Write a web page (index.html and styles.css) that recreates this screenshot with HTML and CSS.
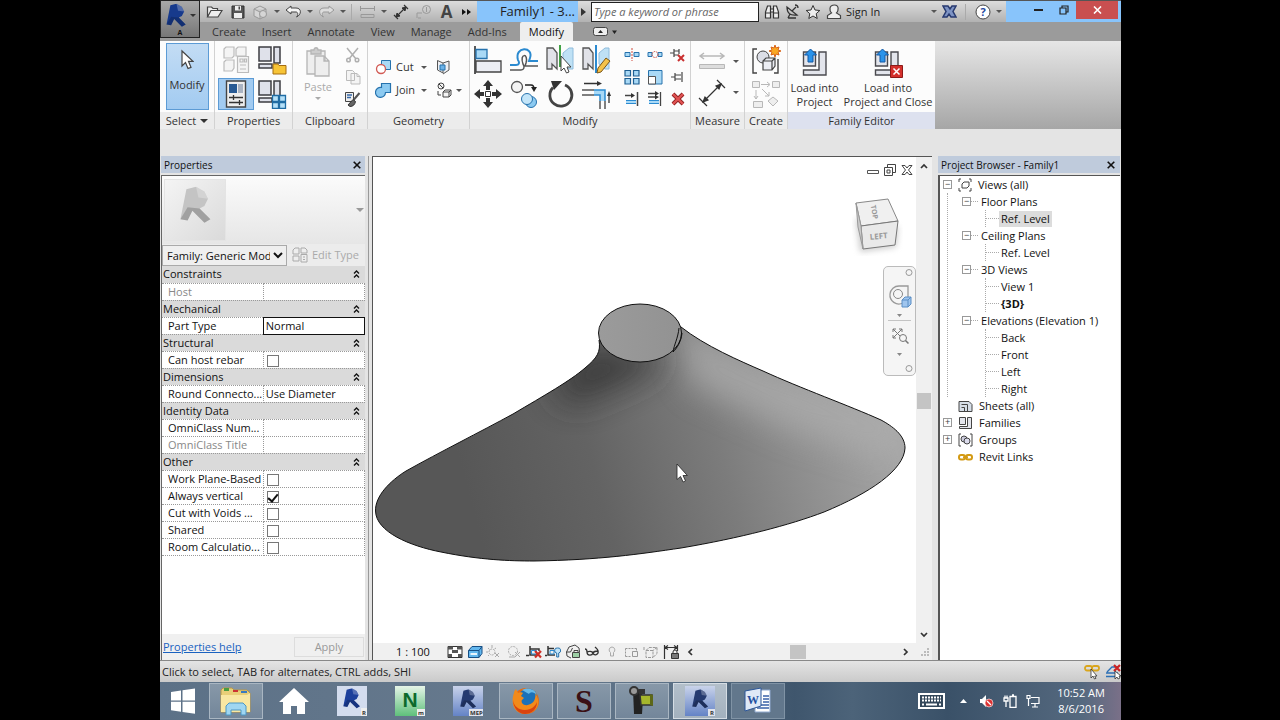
FILE: index.html
```html
<!DOCTYPE html>
<html lang="en">
<head>
<meta charset="utf-8">
<title>Family1 - 3D View</title>
<link rel="stylesheet" href="styles.css">
</head>
<body>
<svg class="sprite" aria-hidden="true">
  <symbol id="rlogo" viewBox="0 0 30 32">
    <path d="M7 2 15 0 22 4 25 10 22 16 18 18 27 27 22 30 12 20 8 28 2 27Z" fill="currentColor"/>
    <path d="M15 0 22 4 25 10 17 9Z" fill="#fff" opacity=".25"/>
    <path d="M8 17 18 18 27 27 22 30 12 20 8 28 2 27Z" fill="#000" opacity=".18"/>
  </symbol>
  <symbol id="fold" viewBox="0 0 7 10">
    <path d="M1 4.500 3.500 2 6 4.500M1 8.500 3.500 6 6 8.500" fill="none" stroke="#111" stroke-width="1.300"/>
  </symbol>
</svg>
<div class="app">
  <header class="head">
    <button class="appbtn" aria-label="Application menu">
      <svg width="23" height="26" viewBox="0 0 30 32" color="#173a8c"><use href="#rlogo"/></svg><i class="dd"></i><small>A</small>
    </button>
    <div class="title">
      <div class="qat">
        <button aria-label="Open"><svg width="17" height="16" viewBox="0 0 17 16"><path d="M1.500 13V3h4l1.500 1.500h4.500v2M1.500 13 5 6.500h11L12 13z" fill="#eee" stroke="#444" stroke-width="1.200"/></svg></button>
        <button aria-label="Save"><svg width="16" height="16" viewBox="0 0 16 16"><path d="M2 2h12v12H2z" fill="#555" stroke="#333"/><path d="M5 2h6v4.500H5zM4 9h8v5H4z" fill="#eee"/><path d="M8.500 2.500h1.500v3H8.500z" fill="#444"/></svg></button>
        <button aria-label="Synchronize"><svg width="17" height="16" viewBox="0 0 17 16" fill="#d5d5d5" stroke="#999"><path d="M2 5 8 2l6 3v7l-6 3-6-3zM2 5l6 3 6-3M8 8v7"/><circle cx="11" cy="10" r="3.500"/></svg></button>
        <button class="n" aria-label="Sync options"><i class="dd"></i></button>
        <button aria-label="Undo"><svg width="17" height="14" viewBox="0 0 17 14"><path d="M6 1 1 5l5 4V7h5c2 0 2.500 3 .5 5 5-2 5.500-9-.5-9H6z" fill="#f4f4f4" stroke="#444"/></svg></button>
        <button class="n" aria-label="Undo list"><i class="dd"></i></button>
        <button aria-label="Redo"><svg width="17" height="14" viewBox="0 0 17 14"><path d="m11 1 5 4-5 4V7H6c-2 0-2.500 3-.5 5C.5 10 0 3 6 3h5z" fill="#ddd" stroke="#999"/></svg></button>
        <button class="n" aria-label="Redo list"><i class="dd"></i></button>
        <span class="vr"></span>
        <button aria-label="Measure"><svg width="17" height="14" viewBox="0 0 17 14" stroke="#999" fill="none"><path d="M1 3.500h15M1.500 1v5M15.500 1v5M2 9.500h13v3H2z"/></svg></button>
        <button class="n" aria-label="Measure options"><i class="dd"></i></button>
        <button aria-label="Aligned dimension"><svg width="16" height="16" viewBox="0 0 16 16" stroke="#333" fill="none"><path d="M3 13 13 3M1 11l4 4M11 1l4 4" stroke-width="1.200"/><path d="m3 13 1-4 3 3zM13 3l-4 1 3 3z" fill="#333"/></svg></button>
        <button aria-label="Tag"><svg width="16" height="16" viewBox="0 0 16 16" stroke="#999" fill="none"><circle cx="10.500" cy="5.500" r="4"/><path d="M10.500 3v5M1 14V9h5M2 14h3"/></svg></button>
        <button class="letter" aria-label="Text">A</button>
        <button class="more" aria-label="More"><svg width="9" height="6" viewBox="0 0 9 6"><path d="m0 0 4 3-4 3zM5 0l4 3-4 3z" fill="#111"/></svg></button>
      </div>
      <h1 class="doc">Family1 - 3...</h1>
      <div class="info">
        <svg width="5" height="8" viewBox="0 0 5 8"><path d="m0 0 5 4-5 4z" fill="#333"/></svg>
        <input class="search" type="text" placeholder="Type a keyword or phrase" aria-label="Search help">
        <button aria-label="Find"><svg width="16" height="16" viewBox="0 0 16 16" fill="#eee" stroke="#333" stroke-width="1.200"><path d="M1.500 14V8l2-6h3v12zM9.500 14V2h3l2 6v6zM6.500 5h3v3h-3zM1.500 9h5M9.500 9h5"/></svg></button>
        <button aria-label="Communication center"><svg width="15" height="16" viewBox="0 0 15 16" fill="none" stroke="#333" stroke-width="1.300"><path d="M2 3c0 6 3 9 10 8zM7 7l4-4M3 14h8M5 10l-2 4M10 1c2 0 3 1 3 3"/></svg></button>
        <button aria-label="Favorites"><svg width="16" height="16" viewBox="0 0 16 16"><path d="m8 1.500 2 4.500 4.800.5-3.600 3.200 1 4.800L8 12l-4.200 2.500 1-4.800L1.200 6.500 6 6z" fill="#eee" stroke="#333"/></svg></button>
        <button class="sign"><svg width="17" height="16" viewBox="0 0 17 16"><path d="M8.500 1c5 0 4 6 2 8l4 2.500v3h-13v-3l4-2.500c-2-2-3-8 3-8z" fill="#eee" stroke="#444" stroke-width="1.200"/></svg>Sign In</button>
        <i class="dd"></i>
        <button aria-label="Exchange"><svg width="15" height="13" viewBox="0 0 15 13"><path d="M1 1h5l2 3 2-3h4l-3 5.500 3 5.500H9L7 9l-2 3H1l3-5.500z" fill="#7d93c4" stroke="#283a70" stroke-width="1.500"/></svg></button>
        <span class="vr"></span>
        <button aria-label="Help"><svg width="16" height="16" viewBox="0 0 16 16"><circle cx="8" cy="8" r="7" fill="#fff" stroke="#444"/><text x="8" y="12" text-anchor="middle" class="q">?</text></svg></button>
        <i class="dd"></i>
      </div>
      <div class="winbtns">
        <button aria-label="Minimize"><svg width="9" height="4"><path d="M0 1h9v2H0z" fill="#222"/></svg></button>
        <button aria-label="Restore"><svg width="10" height="10" viewBox="0 0 10 10"><path d="M1 3h6v6H1zM3 3V1h6v6H7" fill="none" stroke="#222" stroke-width="1.200"/></svg></button>
        <button class="close" aria-label="Close"><svg width="9" height="8" viewBox="0 0 9 8"><path d="m1 .5 7 7M8 .5l-7 7" stroke="#fff" stroke-width="1.600"/></svg></button>
      </div>
    </div>
    <nav class="tabs">
      <button>Create</button><button>Insert</button><button>Annotate</button><button>View</button><button>Manage</button><button>Add-Ins</button><button class="on">Modify</button>
      <button class="mini" aria-label="Minimize ribbon"><svg width="24" height="9" viewBox="0 0 24 9"><rect x=".5" y=".5" width="14" height="8" rx="2" fill="#eee" stroke="#444"/><path d="m5 6 2.500-3L10 6zM19 3.500h5L21.500 7z" fill="#222"/></svg></button>
    </nav>
  </header>

  <section class="ribbon" aria-label="Ribbon">
    <div class="pan p-select">
      <div class="tools"><button class="modify"><svg width="14" height="22" viewBox="0 0 14 22"><path d="M2 2v15l3.500-3.500L8 19.500l3-1.200-2.500-6H13z" fill="#fff" stroke="#444" stroke-width="1.200"/></svg>Modify</button></div>
      <button class="plabel">Select <i class="dd big"></i></button>
    </div>
    <div class="pan p-props">
      <div class="tools two">
        <button aria-label="Family category"><svg width="30" height="30" viewBox="0 0 30 30" fill="#f4f4f4" stroke="#bbb" stroke-width="1.200"><path d="M3 4 5 2h8v9l-2 2H3zM15 4l2-2h8v9H15zM3 17l2-2h8v8l-2 3H3z"/><path d="M16.500 11.500h11v16h-11zM19 14h3v3h-3zM23.500 14h2v3h-2zM19 20h6M19 24h6"/></svg></button>
        <button aria-label="Family types"><svg width="30" height="30" viewBox="0 0 30 30"><path d="M2 2h12v14H2zM17 2h6v16h-6zM2 19h13v4H2z" fill="#dfe1ea" stroke="#3d3d42" stroke-width="1.500"/><path d="M16 19h5l1 1.500h7V29H16z" fill="#f7c436" stroke="#a46c11"/></svg></button>
        <button class="sel" aria-label="Properties"><svg width="22" height="28" viewBox="0 0 22 28"><path d="M1.500 1h19v26h-19z" fill="#eee" stroke="#444" stroke-width="1.400"/><path d="M4 4h8v9H4z" fill="#285a94"/><path d="M13 4h5v9h-5z" fill="#a9b3c2"/><path d="M4 17.500h14M4 22.500h14M8.500 15v5M14.500 20v5" stroke="#333" stroke-width="1.300"/></svg></button>
        <button aria-label="Type properties"><svg width="30" height="30" viewBox="0 0 30 30"><path d="M2 2h12v14H2zM17 2h6v16h-6zM2 19h13v4H2z" fill="#dfe1ea" stroke="#3d3d42" stroke-width="1.500"/><path d="M15.500 16.500h6v6h-6zM22.500 16.500h6v6h-6zM15.500 23.500h6v6h-6zM22.500 23.500h6v6h-6z" fill="#b5e0f8" stroke="#1f6ca4" stroke-width="1.300"/></svg></button>
      </div>
      <div class="plabel">Properties</div>
    </div>
    <div class="pan p-clip">
      <div class="tools clip">
        <button class="paste" disabled><svg width="26" height="30" viewBox="0 0 26 30" fill="#eee" stroke="#b5b5b5" stroke-width="1.300"><path d="M2 4h18v23H2z"/><path d="M6 5V3h3c0-3 4-3 4 0h3v4H6z" fill="#ccc"/><path d="M10 9h9l5 5v15H10zM19 9v5h5"/></svg>Paste<i class="dd"></i></button>
        <div class="col">
          <button aria-label="Cut to clipboard"><svg width="16" height="16" viewBox="0 0 16 16" fill="none" stroke="#b0b0b0" stroke-width="1.500"><path d="m2 1 9 11M13 1 4 12"/><circle cx="3.500" cy="13" r="1.800"/><circle cx="12" cy="13" r="1.800"/></svg></button>
          <button aria-label="Copy"><svg width="16" height="16" viewBox="0 0 16 16" fill="#f4f4f4" stroke="#bbb"><path d="M1.500 1.500h6l2 2v8h-8zM6 4.500h6l3 3V15H6zM12 4.500v3h3"/></svg></button>
          <button aria-label="Match type"><svg width="17" height="16" viewBox="0 0 17 16"><path d="M1.500 1.500h8v9h-8z" fill="#eee" stroke="#444"/><path d="M3 4h5M3 6.500h4" stroke="#3668a8" stroke-width="1.500"/><path d="m15.500 2-6 7" stroke="#555" stroke-width="2"/><path d="M9 8.500 4 14l2 1.500c3 0 5-2 5.500-5z" fill="#666" stroke="#333"/></svg></button>
        </div>
      </div>
      <div class="plabel">Clipboard</div>
    </div>
    <div class="pan p-geo">
      <div class="tools geo">
        <button><svg width="17" height="16" viewBox="0 0 17 16"><path d="M6.500 1.500h9v9h-9z" fill="#a9d9f6" stroke="#2672ad"/><circle cx="6" cy="10" r="4.500" fill="#fff" stroke="#d25b55" stroke-width="1.300"/></svg>Cut<i class="dd"></i></button>
        <button aria-label="Cope"><svg width="15" height="16" viewBox="0 0 15 16"><path d="M1.500 1.500 7 4v10l-5.500-3zM7 4l6-2v9l-6 4" fill="#eef0f4" stroke="#555"/><path d="M4 6h5v5H4z" fill="#6cb2e7" stroke="#2672ad"/></svg></button>
        <button><svg width="17" height="16" viewBox="0 0 17 16"><path d="M6.500 1.500h9v9h-5a5 5 0 1 1-4-5z" fill="#8ccaf1" stroke="#2672ad" stroke-width="1.200"/></svg>Join<i class="dd"></i></button>
        <button aria-label="Split face"><svg width="16" height="16" viewBox="0 0 16 16" fill="#f4f4f4" stroke="#444"><circle cx="5" cy="4" r="3"/><path d="m3 2 4 4M7 10l2-2h6v5l-2 2H7zM7 10h6v5M13 10l2-2M2 9v4h3"/></svg><i class="dd"></i></button>
      </div>
      <div class="plabel">Geometry</div>
    </div>
    <div class="pan p-mod">
      <div class="tools mod">
        <div class="bigs">
          <button aria-label="Align"><svg width="30" height="30" viewBox="0 0 30 30"><path d="M2 1v28" stroke="#222" stroke-width="1.500"/><path d="M3 4.500h11v9H3z" fill="#a9d9f6" stroke="#2672ad" stroke-width="1.300"/><path d="M3 16h25v11H3z" fill="#eceef4" stroke="#444" stroke-width="1.300"/></svg></button>
          <button aria-label="Offset"><svg width="30" height="30" viewBox="0 0 30 30" fill="none"><path d="M1 20h6c3 0 4-2 2-5C5 1 25 1 21 13l-1 3h9" stroke="#2b8ad0" stroke-width="2"/><path d="M1 25h11c3 0 4-3 2-6-4-11 6-11 3-1l-1 3h13" stroke="#555" stroke-width="1.500"/></svg></button>
          <button aria-label="Mirror pick"><svg width="30" height="30" viewBox="0 0 30 30"><path d="M2 3v21h5v-5l5 5V8L8 3z" fill="#e1e2e8" stroke="#555" stroke-width="1.300"/><path d="M28 3v21h-4l-6-5V8l6-5z" fill="#bfe1f5" stroke="#8fbcdc"/><path d="M15 0v22" stroke="#43a246" stroke-width="2"/><path d="M16 11v15l3-3 2.500 5 2.500-1-2-5h4z" fill="#fff" stroke="#444"/></svg></button>
          <button aria-label="Mirror draw"><svg width="30" height="30" viewBox="0 0 30 30"><path d="M2 3v21h5v-5l5 5V8L8 3z" fill="#e1e2e8" stroke="#555" stroke-width="1.300"/><path d="M28 3v21h-4l-6-5V8l6-5z" fill="#bfe1f5" stroke="#8fbcdc"/><path d="M15 0v28" stroke="#2b8ad0" stroke-width="2"/><path d="m25 13 4 3-9 11-4 1 1-5z" fill="#f4c24a" stroke="#7a5518"/></svg></button>
          <button aria-label="Move"><svg width="30" height="30" viewBox="0 0 30 30"><path d="m15 1 5 6h-3v4h-4V7h-3zM15 29l5-6h-3v-4h-4v4h-3zM1 15l6-5v3h4v4H7v3zM29 15l-6-5v3h-4v4h4v3z" fill="#333"/><path d="M12.500 12.500h5v5h-5z" fill="#fff" stroke="#333"/></svg></button>
          <button aria-label="Copy element"><svg width="30" height="30" viewBox="0 0 30 30"><circle cx="8" cy="8" r="5.500" fill="#f4f4f4" stroke="#555" stroke-width="1.300"/><path d="M16 6h6c2 0 3 1 3 4" fill="none" stroke="#222" stroke-width="1.500"/><path d="M22 8h6l-3 5z" fill="#222"/><circle cx="22" cy="23" r="5.500" fill="#8ccaf1" stroke="#2672ad"/><circle cx="18" cy="20" r="5.500" fill="#c3e5f9" stroke="#2672ad"/></svg></button>
          <button aria-label="Rotate"><svg width="30" height="30" viewBox="0 0 30 30"><path d="M8 8.500A11 11 0 1 0 20 6" fill="none" stroke="#444" stroke-width="2.800"/><path d="M6 2h11L9 11z" fill="#333"/></svg></button>
          <button aria-label="Trim to corner"><svg width="30" height="30" viewBox="0 0 30 30" fill="none"><path d="M1 11h12M1 16h12M19 22v8M24 22v8" stroke="#555" stroke-width="1.500"/><path d="M13 11h11v11h-5v-6h-6z" fill="#a9d9f6"/><path d="M13 11h11v11M13 16h6v6" stroke="#2b8ad0" stroke-width="1.500"/><path d="M3 4.500h15M28 24v-9" stroke="#333" stroke-width="1.300"/><path d="m16 2 5 2.500L16 7zM26 17l2-5 2 5z" fill="#333"/></svg></button>
        </div>
        <div class="smalls">
          <button aria-label="Split"><svg width="16" height="16" viewBox="0 0 16 16"><path d="M1 5.500h5v4H1zM10 5.500h5v4h-5z" fill="#a9d9f6" stroke="#2672ad"/><path d="M8 1v13" stroke="#d04b3d" stroke-dasharray="2 1"/></svg></button>
          <button aria-label="Split with gap"><svg width="16" height="16" viewBox="0 0 16 16"><path d="M1 5.500h4v4H1zM11 5.500h4v4h-4z" fill="#a9d9f6" stroke="#2672ad"/><circle cx="8" cy="7.500" r="3" fill="none" stroke="#d04b3d" stroke-dasharray="1.500 1"/></svg></button>
          <button aria-label="Unpin"><svg width="17" height="16" viewBox="0 0 17 16"><path d="M1 6h4M5 2v8M5 4h5M5 8h5M10 2v5" stroke="#444" fill="none" stroke-width="1.200"/><path d="m9 8 6 6M15 8l-6 6" stroke="#c92f2f" stroke-width="2"/></svg></button>
          <button aria-label="Array"><svg width="16" height="16" viewBox="0 0 16 16"><path d="M1 1.500h5.500V7H1zM9.500 1.500H15V7H9.500zM1 9.500h5.500V15H1zM9.500 9.500H15V15H9.500z" fill="#a9d9f6" stroke="#1f5f92" stroke-width="1.200"/></svg></button>
          <button aria-label="Scale"><svg width="16" height="16" viewBox="0 0 16 16"><path d="M1.500 1.500H15V15H1.500z" fill="#a9d9f6" stroke="#2672ad"/><path d="M1.500 7.500h7V15h-7z" fill="#fff" stroke="#555"/></svg></button>
          <button aria-label="Pin"><svg width="16" height="16" viewBox="0 0 16 16"><path d="M1 8h4M5 4v8M5 6h6M5 10h6M12 3v10" stroke="#444" fill="none" stroke-width="1.200"/></svg></button>
          <button aria-label="Trim single"><svg width="16" height="16" viewBox="0 0 16 16"><path d="M2 9.500h10v3H2z" fill="#a9d9f6"/><path d="M2 9.500h10M2 12.500h10" stroke="#2b8ad0"/><path d="M13.500 1v14M1 4.500h7" stroke="#444" stroke-width="1.500"/><path d="m7 2 4 2.500L7 7z" fill="#333"/></svg></button>
          <button aria-label="Trim multiple"><svg width="16" height="16" viewBox="0 0 16 16"><path d="M2 9.500h10v3H2z" fill="#a9d9f6"/><path d="M2 9.500h10M2 12.500h10" stroke="#2b8ad0"/><path d="M13.500 1v14M1 2.500h8M1 6h8" stroke="#444" stroke-width="1.300"/><path d="m8 0 4 2.500L8 5zM8 4l4 2-4 2.500z" fill="#333"/></svg></button>
          <button aria-label="Delete"><svg width="14" height="14" viewBox="0 0 14 14"><path d="m2 2 10 10M12 2 2 12" stroke="#8d1f1f" stroke-width="4"/><path d="m2 2 10 10M12 2 2 12" stroke="#e05252" stroke-width="2.400"/></svg></button>
        </div>
      </div>
      <div class="plabel">Modify</div>
    </div>
    <div class="pan p-meas">
      <div class="tools meas">
        <button disabled aria-label="Measure between"><svg width="30" height="24" viewBox="0 0 30 24" stroke="#b8b8b8" fill="#ddd"><path d="M3 7h24M7 4 3 7l4 3M23 4l4 3-4 3" fill="none" stroke-width="1.500"/><path d="M2.500 15.500h25v4h-25z"/></svg><i class="dd"></i></button>
        <button aria-label="Aligned"><svg width="30" height="30" viewBox="0 0 30 30" stroke="#333" fill="none" stroke-width="1.200"><path d="M6 24 24 6M2 20l8 8M20 2l8 8"/><path d="m6 24 2-5 3 3zM24 6l-5 2 3 3z" fill="#333"/></svg><i class="dd"></i></button>
      </div>
      <div class="plabel">Measure</div>
    </div>
    <div class="pan p-create">
      <div class="tools one">
        <button aria-label="Create group"><svg width="30" height="30" viewBox="0 0 30 30"><path d="M6 4H2v24h4M23 28h4V14" fill="none" stroke="#444" stroke-width="1.400"/><circle cx="12" cy="12" r="6" fill="#dcdee6" stroke="#444"/><path d="M12 16l3-3h9v8l-3 4h-9zM12 16h9v9M21 16l3-3" fill="#eceef4" stroke="#444" stroke-width="1.200"/><path d="m24 0 1 3 3-1-1 3 3 1-3 1 1 3-3-1-1 3-1-3-3 1 1-3-3-1 3-1-1-3 3 1z" fill="#f9a823" stroke="#d8641a"/></svg></button>
        <button disabled aria-label="Create similar"><svg width="30" height="30" viewBox="0 0 30 30" stroke="#b8b8b8" fill="#eee"><path d="M1.500 2.500h7v6h-7zM21.500 2.500h7v6h-7zM2.500 22.500h9v6h-9zM22 18l5 4-5 5-5-5z"/><path d="M10 5.500h8M5 11v9M11 10l7 7M16 3l3 2.500L16 8M3 17l2 3 2-3M18 13v4h-4" fill="none"/></svg></button>
      </div>
      <div class="plabel">Create</div>
    </div>
    <div class="pan p-fam">
      <div class="tools fam">
        <button><svg width="28" height="30" viewBox="0 0 28 30"><path d="M2.500 4h12v14h-12zM18 4h7v23H2.500v-5H18z" fill="#e3e5ec" stroke="#4a4a4f" stroke-width="1.400"/><path d="m9.500 1 6 6H12v7H7V7H3.500z" fill="#2a93ea" stroke="#1258a4"/></svg>Load into<br>Project</button>
        <button><svg width="30" height="30" viewBox="0 0 30 30"><path d="M2.500 4h12v14h-12zM18 4h7v23H2.500v-5H18z" fill="#e3e5ec" stroke="#4a4a4f" stroke-width="1.400"/><path d="m9.500 1 6 6H12v7H7V7H3.500z" fill="#2a93ea" stroke="#1258a4"/><path d="M17.500 17.500h12v12h-12z" fill="#d4302c" stroke="#8d1a18"/><path d="m20.500 20.500 6 6M26.500 20.500l-6 6" stroke="#fff" stroke-width="1.500"/></svg>Load into<br>Project and Close</button>
      </div>
      <div class="plabel">Family Editor</div>
    </div>
  </section>

  <main class="work">
    <aside class="props">
      <h2 class="cap">Properties<button aria-label="Close properties"><svg width="8" height="8" viewBox="0 0 8 8"><path d="m.7.7 6.600 6.600M7.300.7.7 7.300" stroke="#111" stroke-width="1.600"/></svg></button></h2>
      <div class="pbody">
        <div class="type"><div class="thumb"><svg width="36" height="44" viewBox="0 0 30 32" color="#c4c4c4"><use href="#rlogo"/></svg></div><i class="dd big"></i></div>
        <div class="filter">
          <select aria-label="Filter"><option>Family: Generic Models</option></select>
          <button disabled><svg width="16" height="16" viewBox="0 0 16 16" fill="#eee" stroke="#aaa"><path d="M1 3l2-2h4v6H1zM9 1h4l2 2v3H9zM1 9h6v5H1zM9 7.500h6V15H9zM11 10h2M11 12.500h2"/></svg>Edit Type</button>
        </div>
        <table>
          <tr class="h"><th colspan="2">Constraints<svg width="7" height="10"><use href="#fold"/></svg></th></tr>
          <tr class="off"><td>Host</td><td></td></tr>
          <tr class="h"><th colspan="2">Mechanical<svg width="7" height="10"><use href="#fold"/></svg></th></tr>
          <tr><td><label for="pt">Part Type</label></td><td class="edit"><input id="pt" type="text" value="Normal"></td></tr>
          <tr class="h"><th colspan="2">Structural<svg width="7" height="10"><use href="#fold"/></svg></th></tr>
          <tr><td><label for="c1">Can host rebar</label></td><td><input id="c1" type="checkbox"></td></tr>
          <tr class="h"><th colspan="2">Dimensions<svg width="7" height="10"><use href="#fold"/></svg></th></tr>
          <tr><td>Round Connecto...</td><td>Use Diameter</td></tr>
          <tr class="h"><th colspan="2">Identity Data<svg width="7" height="10"><use href="#fold"/></svg></th></tr>
          <tr><td>OmniClass Num...</td><td></td></tr>
          <tr class="off"><td>OmniClass Title</td><td></td></tr>
          <tr class="h"><th colspan="2">Other<svg width="7" height="10"><use href="#fold"/></svg></th></tr>
          <tr><td><label for="c2">Work Plane-Based</label></td><td><input id="c2" type="checkbox"></td></tr>
          <tr><td><label for="c3">Always vertical</label></td><td><input id="c3" type="checkbox" checked></td></tr>
          <tr><td><label for="c4">Cut with Voids ...</label></td><td><input id="c4" type="checkbox"></td></tr>
          <tr><td><label for="c5">Shared</label></td><td><input id="c5" type="checkbox"></td></tr>
          <tr><td><label for="c6">Room Calculatio...</label></td><td><input id="c6" type="checkbox"></td></tr>
        </table>
        <div class="pfoot"><a href="#">Properties help</a><button disabled>Apply</button></div>
      </div>
    </aside>

    <section class="view" aria-label="3D view">
      <div class="canvas">
        <svg class="scene" viewBox="373 157 543 486" preserveAspectRatio="xMidYMid meet">
          <defs>
            <linearGradient id="g" gradientUnits="userSpaceOnUse" x1="470" y1="500" x2="880" y2="390"><stop offset="0" stop-color="#575757"/><stop offset=".3" stop-color="#636363"/><stop offset=".6" stop-color="#7c7c7c"/><stop offset="1" stop-color="#a6a6a6"/></linearGradient>
            <linearGradient id="t" x1="0" x2="1"><stop offset="0" stop-color="#9b9b9b"/><stop offset="1" stop-color="#929292"/></linearGradient>
            <filter id="b1" x="-50%" y="-50%" width="200%" height="200%"><feGaussianBlur stdDeviation="16"/></filter>
            <clipPath id="cp"><path id="body" d="M599 340C601 352 597 358 585 368C570 381 545 395 513 414C480 432 440 452 406 471C390 481 375 496 375.500 511C376 532 410 546 441 552C480 560 510 561 534 561C600 560 640 554 681 548C740 538 790 525 824 512C870 493 904 470 905 448C905 435 892 426 881 420C850 406 800 388 763 371C740 361 705 346 681 327Z"/></clipPath>
          </defs>
          <g clip-path="url(#cp)">
            <path d="M370 300h540v270H370z" fill="url(#g)"/>
            <path d="M675 330 690 385 790 430 890 460 915 420 760 360 680 320Z" fill="#adadad" opacity=".75" filter="url(#b1)"/>
            <path d="M585 345 655 352 664 362 635 380 575 405 550 390Z" fill="#303030" opacity=".8" filter="url(#b1)"/>
          </g>
          <use href="#body" fill="none" stroke="#111" stroke-width="1"/>
          <ellipse cx="640" cy="333" rx="41.500" ry="29" fill="url(#t)" stroke="#111"/>
          <path d="M679 328C678 338 674 345 673 352M682 333C681 342 677 348 673 352" fill="none" stroke="#111"/>
          <path d="M677 464v15.500l3.500-3 2.600 5.500 2.400-1.100-2.500-5.400h4.300z" fill="#fff" stroke="#222" stroke-width=".8"/>
        </svg>
        <div class="mdi">
          <button aria-label="Minimize view"><svg width="12" height="12" viewBox="0 0 12 12"><path d="M.5 6.500h11v3H.5z" fill="#fff" stroke="#555"/></svg></button>
          <button aria-label="Restore view"><svg width="12" height="12" viewBox="0 0 12 12" fill="#fff" stroke="#444"><path d="M3.500.5h8v8h-8z"/><path d="M.5 3.500h8v8h-8zM3 6h3v3H3z"/></svg></button>
          <button aria-label="Close view"><svg width="12" height="12" viewBox="0 0 12 12"><path d="M1 1.500h3l2 2.500 2-2.500h3L7.500 6l3.500 4.500H8L6 8l-2 2.500H1L4.500 6z" fill="#fff" stroke="#444"/></svg></button>
        </div>
        <svg class="cube" width="54" height="62" viewBox="0 0 54 62">
          <filter id="sh"><feGaussianBlur stdDeviation="3"/></filter>
          <path d="m4 24 4 34 36-5 2-20z" fill="#999" opacity=".5" filter="url(#sh)"/>
          <path d="M4 9 36 5 46 27 9 32z" fill="#f0f0f0" stroke="#888"/>
          <path d="m9 32 37-5-3 24-32 4z" fill="#e9e9e9" stroke="#777"/>
          <path d="m4 9 5 23 2 23-5-22z" fill="#ccc" stroke="#999"/>
          <text x="27" y="45" text-anchor="middle" transform="rotate(-5 27 45)">LEFT</text>
          <text x="23" y="21" text-anchor="middle" class="s" transform="rotate(80 23 18)">TOP</text>
        </svg>
        <div class="nav">
          <svg width="31" height="108" viewBox="0 0 31 108" fill="none" stroke="#aaa"><circle cx="25" cy="5.500" r="3" stroke="#999"/><path d="M6 27a9 9 0 0 1 9-8h9v11M6 27a9 9 0 0 0 13 9" stroke="#999" stroke-width="1.300"/><circle cx="14" cy="27" r="4.500" stroke="#888"/><path d="m18 33 3-3h6v7l-3 3h-6z" fill="#9fc5ee" stroke="#5b8ec5"/><path d="M18 33h6v7M24 33l3-3" stroke="#5b8ec5"/><path d="M13 47h5l-2.500 3z" fill="#888" stroke="none"/><path d="M4 53.500h23" stroke="#c4c4c4"/><path d="m9 62 9 9M18 62l-9 9M9 65v-3h3M15 62h3v3M9 68v3h3" stroke="#777"/><circle cx="19" cy="71" r="3.500" fill="#f5f5f5" stroke="#777"/><path d="m21.500 73.500 3 3" stroke="#777" stroke-width="1.500"/><path d="M13 86h5l-2.500 3z" fill="#888" stroke="none"/><circle cx="25" cy="101.500" r="3" stroke="#999"/></svg>
        </div>
      </div>
      <div class="vscroll"><svg width="8" height="6" viewBox="0 0 8 6"><path d="m1 5 3-3 3 3" fill="none" stroke="#333" stroke-width="1.700"/></svg><span></span><svg width="8" height="6" viewBox="0 0 8 6"><path d="m1 1 3 3 3-3" fill="none" stroke="#333" stroke-width="1.700"/></svg></div>
      <div class="vbar">
        <button class="scale">1 : 100</button>
        <div class="vicons">
          <button aria-label="Detail level"><svg width="16" height="14" viewBox="0 0 16 14"><path d="M1 1.500h14v11H1z" fill="#fff" stroke="#333"/><path d="M1 1.500h5v3H1zM10 1.500h5v3h-5zM5 5h6v3H5zM1 9h4v3H1zM11 9h4v3h-4z" fill="#555"/></svg></button>
          <button aria-label="Visual style"><svg width="16" height="14" viewBox="0 0 16 14"><path d="M1.500 5.500 5 1.500h10v7l-3 4H1.500zM1.500 5.500H12v7M12 5.500l3-4" fill="#63b7ee" stroke="#174f85"/><path d="M3.500 8h6.500v2H3.500z" fill="#e8f4fc"/></svg></button>
          <button aria-label="Sun path"><svg width="16" height="14" viewBox="0 0 16 14" stroke="#aaa" fill="none"><circle cx="6" cy="7" r="3" stroke-dasharray="2 1"/><path d="M6 0v3M0 7h2M2 3l1.500 1.500M10 3l-1.500 1M2 11l1-1M9 8l4 4M13 8l-4 4"/></svg></button>
          <button aria-label="Shadows"><svg width="16" height="14" viewBox="0 0 16 14" stroke="#aaa" fill="none"><circle cx="7" cy="6" r="4.500" stroke-dasharray="2 1"/><path d="M3 12h6M9 7l5 5M14 7l-5 5"/></svg></button>
          <button aria-label="Crop view"><svg width="16" height="14" viewBox="0 0 16 14" fill="none"><path d="M4 1v9h8M0 10.500h3M4 4h9v2" stroke="#333" stroke-width="1.500"/><path d="M5.500 5.500h5V9h-5z" stroke="#2b8ad0"/><path d="m9 6 6 6.500M15 6l-6 6.500" stroke="#cc2e26" stroke-width="2.200"/></svg></button>
          <button aria-label="Crop region"><svg width="16" height="14" viewBox="0 0 16 14" fill="none"><path d="M3 1v9h7M0 10.500h2M3 3.500h6" stroke="#333" stroke-width="1.500"/><path d="M5 5.500h4V9H5z" stroke="#2b8ad0"/><path d="M12.500 3a2.500 2.500 0 0 1 1.200 5v4h-2V8a2.500 2.500 0 0 1 .8-5z" fill="#c3e5f9" stroke="#2672ad"/></svg></button>
          <button aria-label="Locked view"><svg width="16" height="15" viewBox="0 0 16 15" fill="none" stroke="#444"><path d="M1.500 8 4 3l6-2 4 3 .5 4M1.500 8 2 12l4 2M1.500 8h4l2-4M9 8V6.500h4V8"/><path d="M7.500 8.500h7v5h-7z" fill="#9dcfa5"/></svg></button>
          <button aria-label="Hide isolate"><svg width="16" height="14" viewBox="0 0 16 14" fill="none" stroke="#333" stroke-width="1.300"><path d="M1 4c1 0 2 1 2 3 0 4 5 4 6 1 1 3 6 2 5-2 0-2-2-3-3-4M3 7c2-1 5-1 6 1 1-2 3-2 5-2"/></svg></button>
          <button aria-label="Reveal hidden"><svg width="16" height="14" viewBox="0 0 16 14" fill="#eee" stroke="#aaa"><path d="M8 2a3 3 0 0 1 1.500 5.500V11h-3V7.500A3 3 0 0 1 8 2z"/></svg></button>
          <button aria-label="Temporary properties"><svg width="16" height="14" viewBox="0 0 16 14" fill="none" stroke="#999"><path d="M1.500 3.500h11M1.500 3.500v8M12.500 3.500v2M1.500 11.500h5" stroke-dasharray="2 1"/><path d="M8.500 6.500h5v5h-5z"/></svg></button>
          <button aria-label="Displacement"><svg width="16" height="14" viewBox="0 0 16 14" fill="none" stroke="#999"><path d="M3 5.500h7v7H3zM3 5.500l3-3h8l-4 3M14 2.500v6l-4 4M1 2v3" stroke-dasharray="3 1"/></svg></button>
          <button aria-label="Constraints"><svg width="16" height="16" viewBox="0 0 16 16" fill="none" stroke="#333"><path d="M1.500 1v14M14.500 1v6M2 3.500h12M5 1.500l-3 2 3 2M11 1.500l3 2-3 2" stroke-width="1.200"/><path d="M10 9.500V8a2 2 0 0 1 4 0v1.500"/><path d="M8.500 9.500h7v5h-7z" fill="#777"/></svg></button>
        </div>
        <div class="hscroll"><svg width="6" height="8" viewBox="0 0 6 8"><path d="M5 1 2 4l3 3" fill="none" stroke="#333" stroke-width="1.700"/></svg><span></span><svg width="6" height="8" viewBox="0 0 6 8"><path d="m1 1 3 3-3 3" fill="none" stroke="#333" stroke-width="1.700"/></svg></div>
        <svg class="grip" width="10" height="10" viewBox="0 0 10 10"><path d="M7 1h2v2H7zM4 4h2v2H4zM7 4h2v2H7zM1 7h2v2H1zM4 7h2v2H4zM7 7h2v2H7z" fill="#bbb"/></svg>
      </div>
    </section>

    <aside class="browser">
      <h2 class="cap">Project Browser - Family1<button aria-label="Close project browser"><svg width="8" height="8" viewBox="0 0 8 8"><path d="m.7.7 6.600 6.600M7.300.7.7 7.300" stroke="#111" stroke-width="1.600"/></svg></button></h2>
      <ul class="tree">
        <li><div class="row"><i class="ex">−</i><svg width="14" height="14" viewBox="0 0 14 14" fill="none" stroke="#444"><path d="M3 1H1v3M1 10v3h2M11 1h2v3M13 10v3h-2M4 6l2-2h5v4l-2 2H4z"/></svg><span>Views (all)</span></div>
          <ul>
            <li><div class="row"><i class="ex">−</i><i class="dash"></i><span>Floor Plans</span></div><ul><li><div class="row"><span class="cur">Ref. Level</span></div></li></ul></li>
            <li><div class="row"><i class="ex">−</i><i class="dash"></i><span>Ceiling Plans</span></div><ul><li><div class="row"><span>Ref. Level</span></div></li></ul></li>
            <li><div class="row"><i class="ex">−</i><i class="dash"></i><span>3D Views</span></div><ul><li><div class="row"><span>View 1</span></div></li><li><div class="row"><span><b>{3D}</b></span></div></li></ul></li>
            <li><div class="row"><i class="ex">−</i><i class="dash"></i><span>Elevations (Elevation 1)</span></div><ul><li><div class="row"><span>Back</span></div></li><li><div class="row"><span>Front</span></div></li><li><div class="row"><span>Left</span></div></li><li><div class="row"><span>Right</span></div></li></ul></li>
          </ul>
        </li>
        <li><div class="row"><i class="ex no"></i><svg width="15" height="14" viewBox="0 0 15 14" fill="#d7dfe8" stroke="#444"><path d="M1 2.500h10l3 3v7H1zM3.500 5.500h6v7M3.500 8.500h3v4"/></svg><span>Sheets (all)</span></div></li>
        <li><div class="row"><i class="ex">+</i><svg width="15" height="14" viewBox="0 0 15 14" fill="#e3e5ec" stroke="#444"><path d="M1.500 1.500h6v7h-6zM9.500 1.500h4v11h-12v-2h8z"/></svg><span>Families</span></div></li>
        <li><div class="row"><i class="ex">+</i><svg width="15" height="14" viewBox="0 0 15 14" fill="none" stroke="#444"><path d="M3 1H1v12h2M12 1h2v12h-2"/><circle cx="6" cy="6" r="3" fill="#ccd"/><circle cx="9" cy="8" r="3" fill="#dde"/></svg><span>Groups</span></div></li>
        <li><div class="row"><i class="ex no"></i><svg width="15" height="14" viewBox="0 0 15 14" fill="none" stroke="#d39a14" stroke-width="2"><rect x="1" y="5" width="6" height="4.500" rx="2"/><rect x="8" y="5" width="6" height="4.500" rx="2"/><path d="M5 7.300h5"/></svg><span>Revit Links</span></div></li>
      </ul>
    </aside>
  </main>

  <footer class="status">
    <span>Click to select, TAB for alternates, CTRL adds, SHI</span>
    <div>
      <button aria-label="Select links"><svg width="17" height="16" viewBox="0 0 17 16"><g fill="none" stroke="#d9a51c" stroke-width="1.800"><rect x="1" y="2" width="7" height="4.500" rx="2"/><rect x="8" y="2" width="7" height="4.500" rx="2"/></g><path d="M7 5v9l2-2 1.500 3 1.500-.7L10.700 12H13z" fill="#fff" stroke="#333" stroke-width=".8"/></svg></button>
      <button aria-label="Select underlay"><svg width="16" height="16" viewBox="0 0 16 16" fill="none"><path d="m2 8 5-5h6M1 9h12M1 12.500h9" stroke="#2b6fb5" stroke-width="1.300"/><path d="m9 1 6 6M15 1 9 7" stroke="#cc2222" stroke-width="2.200"/><path d="M10 7v8l2-2 1 2 2-1-1-2h2z" fill="#fff" stroke="#333" stroke-width=".8"/></svg></button>
    </div>
  </footer>

  <nav class="taskbar" aria-label="Taskbar">
    <button class="start" aria-label="Start"><svg width="26" height="26" viewBox="0 0 26 26" fill="#fff"><path d="m1 4 10-1.500v10H1zM12.500 2.300 25 .5v12H12.500zM1 13.800h10v10L1 22.300zM12.500 13.800H25v12l-12.500-1.800z"/></svg></button>
    <button class="open" aria-label="File Explorer"><svg width="34" height="30" viewBox="0 0 34 30"><path d="M2 4 4 2h9l2 2h13l3 3v19H2z" fill="#e9cf78" stroke="#b7974a"/><path d="M5 2h5v3H5z" fill="#4a9c3f"/><path d="M14 4h5v2h-5z" fill="#c33"/><path d="M22 5h6v2h-6z" fill="#3a7ac0"/><path d="M2 9h26l3-2v19H2z" fill="#f9e7a2"/><path d="M7 29v-9l3-3h14l3 3v9h-5v-5H12v5z" fill="#9fd6f2" stroke="#4d97c4"/></svg></button>
    <button aria-label="Home"><svg width="30" height="26" viewBox="0 0 30 26"><path d="M15 0 30 14h-4v12h-8v-8h-6v8H4V14H0z" fill="#fff"/></svg></button>
    <button aria-label="Revit"><svg width="30" height="30" viewBox="0 0 30 30"><rect width="30" height="30" fill="#d3dcee"/><svg x="5" y="1" width="20" height="24" viewBox="0 0 30 32" color="#1c3f9c"><use href="#rlogo"/></svg><rect x="24" y="22" width="6" height="8" fill="#eee"/><text x="25" y="29">R</text></svg></button>
    <button aria-label="Navisworks"><svg width="30" height="30" viewBox="0 0 30 30"><defs><linearGradient id="ng" x2="0" y2="1"><stop offset="0" stop-color="#e6f4e8"/><stop offset="1" stop-color="#5fc07b"/></linearGradient></defs><rect width="30" height="30" fill="url(#ng)"/><text x="15" y="21" text-anchor="middle" class="bign">N</text><rect x="22" y="23" width="8" height="7" fill="#eee"/><text x="23" y="29">m</text></svg></button>
    <button aria-label="Revit MEP"><svg width="30" height="30" viewBox="0 0 30 30"><defs><linearGradient id="bg" x2="0" y2="1"><stop offset="0" stop-color="#c9d3ea"/><stop offset="1" stop-color="#6483c6"/></linearGradient></defs><rect width="30" height="30" fill="url(#bg)"/><svg x="6" y="2" width="19" height="23" viewBox="0 0 30 32" color="#253a70"><use href="#rlogo"/></svg><rect x="16" y="23" width="14" height="7" fill="#dfe3ee"/><text x="17" y="29">MEP</text></svg></button>
    <button class="open" aria-label="Firefox"><svg width="28" height="28" viewBox="0 0 28 28"><circle cx="14" cy="14" r="13" fill="#e66a12"/><circle cx="16" cy="11" r="9.500" fill="#1c71b8"/><path d="M10 3c4-3 13-2 15 5-4-4-7-3-8-1z" fill="#67b9e8"/><path d="M2 6c0-2 1-3 2-4l2 4c2-1 4-1 5 0l-2 3 3 2c-2 2-3 2-2 5 3 4 9 2 12-2 1-2 2-6 1-8 4 5 5 12 0 17-6 6-16 5-20-1C0 18 0 11 2 6z" fill="#f28a1a"/><path d="M1 13c1 8 9 12 17 9 3-1 6-4 7-7 0 8-6 12-12 12C6 27 1 20 1 13z" fill="#d9430f"/></svg></button>
    <button class="open s" aria-label="Scribe">S</button>
    <button class="open" aria-label="Camera"><svg width="30" height="30" viewBox="0 0 30 30"><path d="M6 4 14 3l2 10-1 15H7z" fill="#222"/><circle cx="7" cy="5" r="4" fill="#999" stroke="#333" stroke-width="2"/><path d="M12 3h6v5h-6z" fill="#333"/><path d="M13 9h12v10H14z" fill="#a5b62b" stroke="#333" stroke-width="1.500"/><path d="m23 8 3 1v11l-3-1z" fill="#5d6818"/></svg></button>
    <button class="open hot" aria-label="Revit window"><svg width="30" height="30" viewBox="0 0 30 30"><rect width="30" height="30" fill="url(#bg)"/><svg x="6" y="2" width="19" height="23" viewBox="0 0 30 32" color="#253a70"><use href="#rlogo"/></svg><rect x="23" y="23" width="7" height="7" fill="#dfe3ee"/><text x="25" y="29">R</text></svg></button>
    <button class="open dim" aria-label="Word"><svg width="30" height="28" viewBox="0 0 30 28"><path d="M12 3h15v22H12z" fill="#fff" stroke="#8fa9cf"/><path d="M20 9h6M20 12h6M20 15h6M14 18h12M14 21h12" stroke="#3a62a8" stroke-width="1.300"/><path d="m2 4 16-3v18L2 24z" fill="#dfe9f7" stroke="#2c5698"/><text x="10" y="17" text-anchor="middle" class="w">W</text></svg></button>
    <div class="tray">
      <button aria-label="Touch keyboard"><svg width="27" height="16" viewBox="0 0 27 16"><path d="M1 1h25v14H1z" fill="#33475a" stroke="#fff" stroke-width="2"/><path d="M4 4.500h19M4 7.500h19" stroke="#fff" stroke-width="2" stroke-dasharray="2 1"/><path d="M4 11.500h2M8 11.500h11M21 11.500h2" stroke="#fff" stroke-width="2"/></svg></button>
      <button aria-label="Show hidden icons"><svg width="7" height="4"><path d="m0 4 3.500-4L7 4z" fill="#fff"/></svg></button>
      <button aria-label="Volume muted"><svg width="15" height="14" viewBox="0 0 15 14"><path d="M1 5h2l4-4v12L3 9H1z" fill="#fff"/><circle cx="10" cy="9" r="4" fill="#d33" stroke="#fff" stroke-width=".6"/><path d="m8 7 4 4" stroke="#fff" stroke-width="1.300"/></svg></button>
      <button aria-label="Battery"><svg width="14" height="14" viewBox="0 0 14 14" fill="none" stroke="#fff" stroke-width="1.300"><path d="M7 2.500h6v11H7zM9 1h2M1 4h4v3H1zM2 1.500V4M4 1.500V4M3 7v6"/></svg></button>
      <button aria-label="Network"><svg width="14" height="14" viewBox="0 0 14 14" fill="none" stroke="#fff" stroke-width="1.200"><path d="M5 3.500h8v6H5M9 10v3M6 13h6M1 1.500h3v3H1zM2.500 5v7"/></svg></button>
      <time>10:52 AM<br>8/6/2016</time>
    </div>
  </nav>
</div>
</body>
</html>
```
FILE: styles.css
```css
* { box-sizing: border-box; }
body { margin: 0; background: #000; color: #222; font: 11px/14px "Open Sans", "Noto Sans", sans-serif; }
button { border: 0; padding: 0; margin: 0; background: none; color: inherit; font: inherit; display: flex; align-items: center; justify-content: center; }
svg { display: block; flex: none; }
h1, h2 { margin: 0; font-weight: 400; }
ul { list-style: none; margin: 0; padding: 0; }
.sprite { position: absolute; width: 0; height: 0; }
.dd { flex: none; width: 0; height: 0; border: 3px solid transparent; border-top: 3px solid #555; border-bottom: 0; }
.dd.big { border-width: 4px 4px 0; border-top-color: #333; }

.app { margin: 0 12.42% 0 12.5%; height: 100vh; min-height: 680px; display: flex; flex-direction: column; background: #e4e4e4; overflow: hidden; }

/* title bar and tabs */
.head { display: grid; grid-template: 22px 19px / 40px 1fr; background: #9b9b9b; }
.appbtn { grid-row: 1 / 3; height: 38px; border: 1px solid #222; background: linear-gradient(#a8a8a8, #777); flex-wrap: wrap; align-content: center; gap: 0 2px; color: #111; }
.appbtn .dd { border-top-color: #333; }
.appbtn small { width: 100%; font: 700 7px/7px "Open Sans", sans-serif; }
.title { display: flex; background: linear-gradient(#dcdcdc, #b2b2b2); border-top: 1px solid #555; }
.qat { display: flex; align-items: center; padding-left: 3px; flex: 0 0 277px; }
.qat button { width: 23px; height: 20px; }
.qat .n { width: 10px; }
.qat .more { width: 16px; }
.qat .letter { font: 700 17px/20px "Open Sans", sans-serif; color: #444; }
.vr { width: 1px; height: 16px; margin: 0 4px 0 3px; background: #aaa; }
.doc { flex: 0 0 101px; background: #88c4fb; font-size: 13px; line-height: 21px; text-align: right; padding-right: 3px; white-space: nowrap; overflow: hidden; }
.info { flex: 1; display: flex; align-items: center; padding: 0 4px 0 3px; gap: 5px; }
.info .search { width: 168px; height: 20px; border: 1px solid #222; padding: 0 2px; background: #fff; font: italic 11px/16px "Open Sans", sans-serif; }
.search::placeholder { color: #666; opacity: 1; }
.sign { gap: 3px; margin-right: auto; }
.q { font: 700 11px "Open Sans", sans-serif; fill: #2348a0; }
.winbtns { flex: 0 0 115px; display: flex; align-items: flex-start; justify-content: flex-end; background: #88c4fb; padding-right: 3px; }
.winbtns button { width: 25px; height: 18px; }
.winbtns .close { width: 42px; background: #c94f50; }
.tabs { display: flex; padding-left: 4px; color: #333; }
.tabs button { padding: 0 8px; height: 19px; }
.tabs .on { margin-left: 5px; padding: 0 9px; background: #eee; border-radius: 2px 2px 0 0; color: #111; }
.tabs .mini { padding-left: 20px; }

/* ribbon */
.ribbon { display: flex; flex: none; height: 88px; background: linear-gradient(#e6e6e6, #a6a6a6); }
.pan { display: flex; flex-direction: column; flex: none; background: #fcfcfc; border-right: 1px solid #d2d2d2; color: #333; }
.tools { flex: 1; display: flex; align-items: center; justify-content: center; }
.plabel { height: 17px; background: #ececec; text-align: center; justify-content: center; line-height: 17px; gap: 4px; }
.p-select { width: 55px; }
.p-props { width: 78px; }
.p-clip { width: 75px; }
.p-geo { width: 102px; }
.p-mod { width: 221px; }
.p-meas { width: 54px; }
.p-create { width: 43px; }
.p-fam { width: 147px; border: 0; }
.p-fam .plabel { background: #dde1ef; }
.modify { flex-direction: column; justify-content: flex-start; width: 43px; height: 67px; gap: 7px; padding-top: 5px; background: linear-gradient(#c3dcf4, #a2cbf1); border: 1px solid #5c9bd5; }
.two { display: grid; grid-template: 34px 34px / 36px 36px; align-content: center; }
.two .sel { background: #a2cbf1; border: 1px solid #5c9bd5; height: 32px; place-self: center stretch; }
.clip { gap: 12px; padding-left: 5px; }
.paste { flex-direction: column; color: #aaa; gap: 3px; padding-bottom: 6px; }
.paste .dd { border-top-color: #aaa; }
.col { display: grid; grid-auto-rows: 22px; align-items: center; }
.geo { display: grid; grid-template: 23px 23px / 54px 26px; column-gap: 7px; align-content: center; justify-content: center; padding-top: 4px; }
.geo button { justify-content: flex-start; gap: 4px; }
.geo .dd { margin-left: auto; margin-right: 2px; }
.mod { gap: 6px; padding-right: 1px; }
.bigs { display: grid; grid-template: 34px 34px / repeat(4, 36px); }
.smalls { display: grid; grid-template: repeat(3, 22px) / repeat(3, 23px); align-items: center; }
.meas { flex-direction: column; justify-content: space-evenly; padding-top: 4px; }
.meas button { gap: 6px; }
.one { display: grid; grid-auto-rows: 34px; align-content: center; }
.fam { align-items: stretch; gap: 5px; padding: 4px 0 0; }
.fam button { display: block; text-align: center; }
.fam svg { margin: 0 auto 3px; }

/* work area */
.work { flex: 1; min-height: 0; display: grid; grid-template: minmax(0, 1fr) / 209px minmax(0, 1fr) 186px; padding-top: 27px; gap: 3px; }
.cap { display: flex; align-items: center; justify-content: space-between; flex: none; height: 17px; background: #bfcbdc; font-size: 10px; padding: 0 4px 0 3px; color: #111; }
.props { display: flex; flex-direction: column; margin-left: 1px; border-right: 1px solid #999; padding-right: 3px; }
.pbody { flex: 1; display: flex; flex-direction: column; margin-top: 2px; border: 1px solid #666; border-width: 1px 0 0 1px; background: #fff; }
.type { display: flex; align-items: center; justify-content: space-between; padding: 3px 1px 3px 2px; height: 68px; background: linear-gradient(#fbfbfb, #e6e6e6); }
.type .dd { border-top-color: #999; }
.thumb { width: 62px; height: 62px; padding: 4px 0 0 13px; background: linear-gradient(135deg, #f4f4f4, #dadada); border: 1px solid #e4e4e4; }
.filter { display: flex; background: #ececec; height: 22px; gap: 5px; align-items: center; }
.filter select { width: 125px; height: 21px; border: 1px solid #aaa; border-radius: 0; background: #efefef; color: #111; font: 11px/14px "Open Sans", sans-serif; padding: 0; }
.filter button { gap: 4px; color: #aaa; white-space: nowrap; }
table { width: 100%; border-collapse: collapse; table-layout: fixed; color: #111; }
tr { height: 17px; }
th { background: #dadada; font-weight: 400; text-align: left; padding: 0 0 0 1px; height: 17px; }
th svg { float: right; margin: 2px 5px 0 0; }
td { padding: 0 0 0 2px; height: 17px; line-height: 14px; border: 1px dotted #999; white-space: nowrap; overflow: hidden; }
td:first-child { width: 101px; padding-left: 6px; border-left: 0; }
.off td { color: #888; }
.edit { border: 1px solid #111; }
.edit input { display: block; width: 100%; height: 14px; border: 0; padding: 0; font: inherit; color: inherit; background: none; outline: 0; }
input[type=checkbox] { appearance: none; display: block; width: 12px; height: 12px; margin: 2px 0 0 1px; border: 1px solid #777; background: #fff; }
input[type=checkbox]:checked::before { content: ""; display: block; width: 4px; height: 8px; margin: 0 auto; border: solid #111; border-width: 0 2px 2px 0; transform: rotate(40deg); }
.pfoot { margin-top: auto; height: 26px; display: flex; align-items: center; justify-content: space-between; padding: 0 1px; background: #f0f0f0; }
.pfoot a { color: #1a62c0; }
.pfoot button { width: 70px; height: 20px; border: 1px solid #ddd; color: #999; }

/* 3D view */
.view { display: grid; grid-template: minmax(0, 1fr) 17px / minmax(0, 1fr) 16px; border: 1px solid #555; border-right: 0; border-bottom: 0; background: #fff; }
.canvas { position: relative; overflow: hidden; }
.scene { width: 100%; height: 100%; }
.mdi { position: absolute; top: 7px; right: 3px; display: flex; gap: 5px; }
.cube { position: absolute; top: 37px; right: 10px; }
.cube text { font: 700 8px "Open Sans", sans-serif; fill: #999; }
.cube .s { font-size: 7px; }
.nav { position: absolute; top: 109px; right: 0; border: 1px solid #bbb; border-radius: 5px; background: #f5f5f5; }
.vscroll { display: flex; flex-direction: column; align-items: center; justify-content: space-between; padding: 6px 0 5px; background: #f0f0f0; }
.vscroll span { width: 14px; height: 16px; background: #c4c4c4; }
.vbar { grid-column: 1 / 3; display: flex; align-items: center; background: #f0f0f0; }
.scale { flex: 0 0 74px; justify-content: flex-start; padding-left: 23px; color: #111; }
.vicons { flex: 0 0 232px; display: flex; justify-content: space-between; align-items: center; }
.hscroll { flex: 1; display: flex; align-items: center; justify-content: space-between; padding: 0 8px; }
.hscroll span { width: 16px; height: 14px; background: #c4c4c4; }
.grip { margin: 0 2px 0 3px; }

/* project browser */
.browser { display: flex; flex-direction: column; margin: 0 1px 0 3px; }
.browser .cap { padding: 0 5px 0 3px; }
.tree { flex: 1; margin-top: 2px; background: #fff; border: 1px solid #555; border-width: 1px 0 0 2px; padding-left: 3px; color: #111; }
.row { display: flex; align-items: center; height: 17px; }
.row span { padding: 0 2px; white-space: nowrap; }
.row > svg { margin: 0 4px 0 6px; }
.cur { background: #dcdcdc; line-height: 16px; }
.ex { flex: none; width: 9px; height: 9px; border: 1px solid #999; background: #fff; font: 9px/7px "Liberation Sans", sans-serif; text-align: center; color: #444; }
.ex.no { border: 0; background: none; }
.dash { width: 7px; margin-right: 1px; border-top: 1px dotted #aaa; }
.tree > li > ul { margin-left: 4px; padding-left: 14px; border-left: 1px dotted #aaa; }
.tree ul ul { margin-left: 23px; border-left: 1px dotted #aaa; }
.tree ul ul .row::before { content: ""; width: 13px; border-top: 1px dotted #aaa; }

/* status bar and taskbar */
.status { flex: none; height: 22px; display: flex; align-items: center; justify-content: space-between; padding-left: 2px; border-top: 1px solid #888; background: linear-gradient(#e4e4e4, #cacaca); }
.status div { display: flex; gap: 4px; }
.taskbar { flex: none; height: 38px; display: flex; align-items: center; gap: 4px; padding: 0 8px 0 1px; background: linear-gradient(90deg, #5c7187, #66798d 35%, #5a6f84 55%, #3f566d 66%, #4c6379 72%, #3a5168 82%, #55697f 96%, #7a7088); color: #fff; }
.taskbar > button { width: 54px; height: 36px; flex: none; }
.taskbar .start { width: 44px; }
.taskbar .open { background: linear-gradient(#8798a8, #73869a); border: 1px solid #a9b6c2; }
.taskbar .hot { background: linear-gradient(#b3bfca, #a3b1be); border-color: #d5dde4; }
.taskbar .dim { background: #62778c; border-color: #8093a5; }
.taskbar text { font: 700 6px "Open Sans", sans-serif; fill: #333; }
.taskbar .bign { font: 700 21px "Liberation Sans", sans-serif; fill: #0c6a2c; }
.taskbar .w { font: 700 12px "Liberation Serif", serif; fill: #2450a0; }
.taskbar .s { font: 700 32px/34px "Liberation Serif", serif; color: #3a1014; }
.tray { margin-left: auto; display: flex; align-items: center; gap: 9px; }
.tray button:first-child { margin-right: 6px; }
.tray button:nth-child(2) { margin-right: 3px; }
.tray time { text-align: center; line-height: 16px; width: 64px; }
```
